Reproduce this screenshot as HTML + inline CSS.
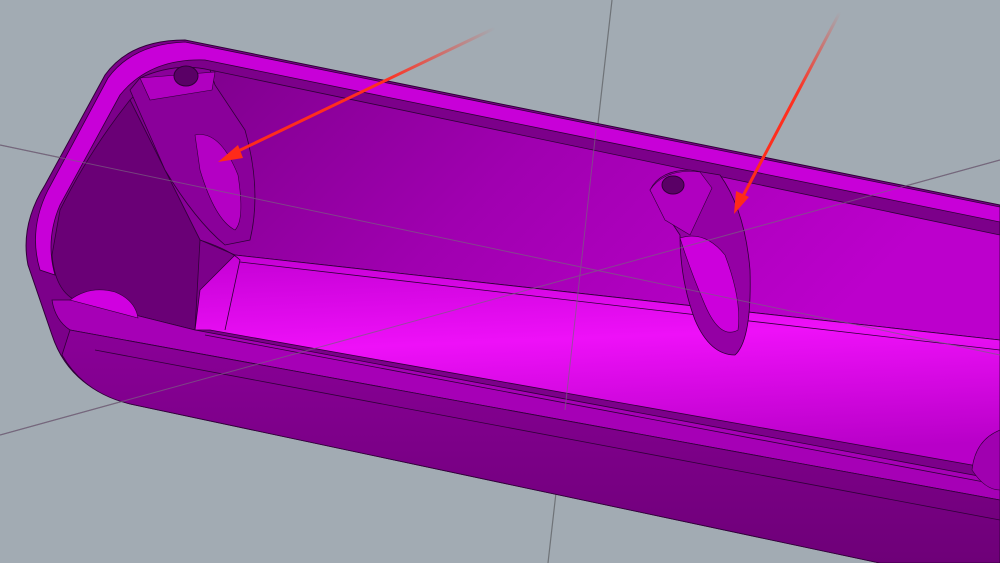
<!DOCTYPE html>
<html><head><meta charset="utf-8"><style>html,body{margin:0;padding:0;background:#a2abb3;overflow:hidden}svg{display:block}</style></head>
<body>
<svg width="1000" height="563" viewBox="0 0 1000 563" xmlns="http://www.w3.org/2000/svg">
<defs>
<linearGradient id="wall" x1="0" y1="0" x2="1" y2="0.3"><stop offset="0" stop-color="#7a0088"/><stop offset="0.5" stop-color="#a000b0"/><stop offset="1" stop-color="#bc00cc"/></linearGradient>
<linearGradient id="floor" x1="0" y1="0" x2="0.15" y2="1"><stop offset="0" stop-color="#c400d4"/><stop offset="0.45" stop-color="#ee10f8"/><stop offset="1" stop-color="#b800c8"/></linearGradient>
<linearGradient id="front" x1="0" y1="0" x2="0" y2="1"><stop offset="0" stop-color="#8a0098"/><stop offset="1" stop-color="#6e0078"/></linearGradient>
<linearGradient id="arr1" x1="495" y1="28" x2="220" y2="160" gradientUnits="userSpaceOnUse"><stop offset="0" stop-color="#ff3020" stop-opacity="0"/><stop offset="0.4" stop-color="#ff3020"/><stop offset="1" stop-color="#ff2a1a"/></linearGradient>
<linearGradient id="arr2" x1="840" y1="12" x2="735" y2="212" gradientUnits="userSpaceOnUse"><stop offset="0" stop-color="#ff3020" stop-opacity="0"/><stop offset="0.4" stop-color="#ff3020"/><stop offset="1" stop-color="#ff2a1a"/></linearGradient>
</defs>
<g stroke="#6f7378" stroke-width="1.2" fill="none">
<line x1="612" y1="0" x2="548" y2="563"/>
<line x1="0" y1="145" x2="1000" y2="355"/>
<line x1="0" y1="435" x2="1000" y2="160"/>
</g>
<path d="M185,40 L1000,205 L1000,563 L880,563 L135,405 Q70,390 52,335 L28,265 Q20,225 45,185 L105,75 Q130,40 185,40 Z" fill="#7c008a" stroke="#300038" stroke-width="1"/>
<path d="M185,42 L1000,207 L1000,222 L205,60 Q150,58 120,95 L60,205 Q45,240 55,275 L40,270 Q28,230 48,190 L108,78 Q133,44 185,42 Z" fill="#c800d8" stroke="#300038" stroke-width="0.8"/>
<path d="M210,70 L1000,235 L1000,340 L235,255 L200,240 L130,100 Q160,68 210,70 Z" fill="url(#wall)" stroke="#300038" stroke-width="0.8"/>
<path d="M130,100 L200,240 L195,330 L75,300 Q55,290 52,255 L60,210 Q90,150 130,100 Z" fill="#6a0076" stroke="#300038" stroke-width="0.8"/>
<path d="M235,255 L1000,340 L1000,470 L210,330 L195,330 L200,290 Z" fill="url(#floor)" stroke="#300038" stroke-width="0.8"/>
<path d="M75,300 L195,330 L1000,480 L1000,500 L70,330 Q55,320 52,300 Z" fill="#a600b6" stroke="#300038" stroke-width="0.8"/>
<path d="M70,330 L1000,500 L1000,563 L880,563 L135,405 Q85,395 62,355 Z" fill="url(#front)" stroke="#300038" stroke-width="0.8"/>
<g stroke="#300038" stroke-width="0.8" fill="none">
<path d="M200,240 Q230,250 240,260 L225,330"/>
<path d="M240,262 L1000,350"/>
<path d="M205,335 L1000,485"/>
<path d="M95,350 L1000,520"/>
</g>
<path d="M70,300 Q90,285 115,292 Q135,300 138,318 Z" fill="#d000e0" stroke="#300038" stroke-width="0.6"/>
<path d="M130,90 L140,78 Q175,62 210,70 L215,85 L245,130 Q262,190 250,240 L225,245 Q195,220 165,170 Z" fill="#8a009a" stroke="#300038" stroke-width="0.8"/>
<path d="M140,78 L215,72 L212,90 L150,100 Z" fill="#b000c0" stroke="#300038" stroke-width="0.6"/>
<ellipse cx="186" cy="76" rx="12" ry="10" fill="#5a0066" stroke="#300038"/>
<path d="M195,135 Q220,130 238,175 Q245,220 235,230 Q215,220 200,170 Z" fill="#b400c4" stroke="#300038" stroke-width="0.6"/>
<path d="M650,190 Q660,170 690,170 L720,175 Q745,210 750,270 Q752,340 735,355 Q710,355 695,320 Q680,280 680,235 Z" fill="#9400a4" stroke="#300038" stroke-width="0.8"/>
<path d="M650,190 Q665,168 700,172 L712,188 L690,235 L665,220 Z" fill="#b000c0" stroke="#300038" stroke-width="0.6"/>
<ellipse cx="673" cy="185" rx="11" ry="9" fill="#5a0066" stroke="#300038"/>
<path d="M680,238 Q705,230 725,255 Q742,300 738,330 Q720,340 705,305 Q690,270 680,238 Z" fill="#cc00dc" stroke="#300038" stroke-width="0.6"/>
<path d="M1000,430 Q975,440 972,470 Q985,490 1000,490 Z" fill="#a000b0" stroke="#300038" stroke-width="0.6"/>
<g stroke="#7a6080" stroke-width="1" fill="none" opacity="0.7">
<line x1="0" y1="145" x2="1000" y2="355"/>
<line x1="0" y1="435" x2="1000" y2="160"/>
<line x1="596" y1="130" x2="565" y2="410"/>
</g>
<line x1="495" y1="28" x2="232" y2="154" stroke="url(#arr1)" stroke-width="3"/>
<polygon points="218,162 238,145 243,158" fill="#ff2a1a"/>
<line x1="840" y1="12" x2="742" y2="198" stroke="url(#arr2)" stroke-width="3"/>
<polygon points="734,214 736,191 749,197" fill="#ff2a1a"/>
</svg>
</body></html>
